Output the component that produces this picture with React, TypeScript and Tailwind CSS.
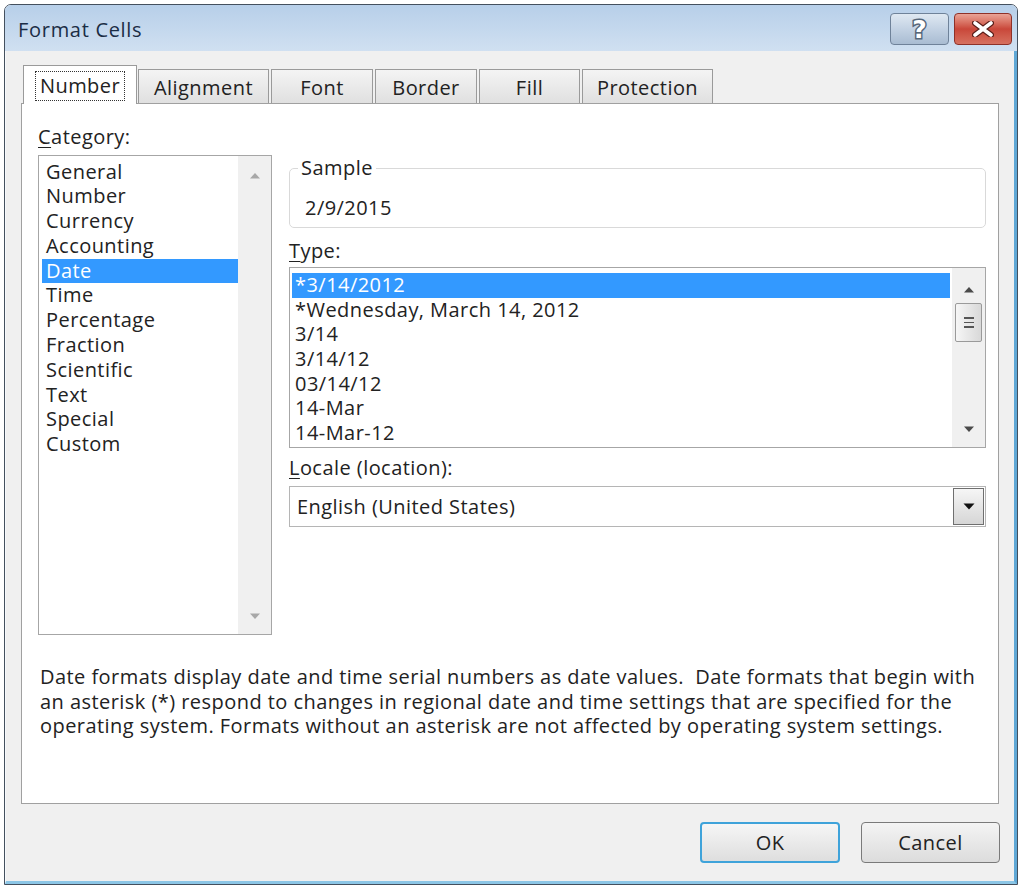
import React from "react";

const categories = [
  "General",
  "Number",
  "Currency",
  "Accounting",
  "Date",
  "Time",
  "Percentage",
  "Fraction",
  "Scientific",
  "Text",
  "Special",
  "Custom",
];

const types = [
  "*3/14/2012",
  "*Wednesday, March 14, 2012",
  "3/14",
  "3/14/12",
  "03/14/12",
  "14-Mar",
  "14-Mar-12",
];

const tabs = [
  { label: "Alignment", w: "w-[131px]", ml: "ml-[1px]" },
  { label: "Font", w: "w-[102px]", ml: "ml-[2px]" },
  { label: "Border", w: "w-[102px]", ml: "ml-[2px]" },
  { label: "Fill", w: "w-[101px]", ml: "ml-[2px]" },
  { label: "Protection", w: "w-[131px]", ml: "ml-[2px]" },
];

function Arrow({ dir, color }: { dir: "up" | "down"; color: string }) {
  return (
    <svg width="12" height="7" viewBox="0 0 12 7">
      {dir === "up" ? (
        <path d="M1 6.5 L6 1 L11 6.5 Z" fill={color} />
      ) : (
        <path d="M1 0.5 L11 0.5 L6 6 Z" fill={color} />
      )}
    </svg>
  );
}

function Label({ accel, rest }: { accel: string; rest: string }) {
  return (
    <div className="h-[24px] leading-[24px] text-[20px] tracking-[0.45px] text-[#222]">
      <span className="underline underline-offset-[3px] decoration-1">{accel}</span>
      {rest}
    </div>
  );
}

export default function App() {
  return (
    <div className="w-[1024px] h-[889px] bg-white pl-[4px] pt-[4px] font-['Open_Sans',sans-serif]">
      <div className="w-[1014px] h-[881px] border border-[#44505e] rounded-t-[7px] flex flex-col overflow-hidden">
        {/* title bar */}
        <div className="h-[46px] shrink-0 flex items-center bg-gradient-to-b from-[#b7cfe9] to-[#d0e0f1] pl-[13px] pr-[5px]">
          <span className="text-[20px] text-[#1b2d45] tracking-[0.7px] pt-[4px]">Format Cells</span>
          <div className="ml-auto flex items-start self-start mt-[8px] gap-[5px]">
            <div className="w-[59px] h-[32px] rounded-[4px] border border-[#6f8299] bg-gradient-to-b from-[#dfe8f2] via-[#c3d2e3] to-[#a9bcd2] flex items-center justify-center">
              <span className="text-[25px] font-bold text-white leading-none [paint-order:stroke_fill] [-webkit-text-stroke:3px_#55667a] font-['DejaVu_Sans',sans-serif]">
                ?
              </span>
            </div>
            <div className="w-[58px] h-[32px] rounded-[4px] border border-[#8e3128] bg-gradient-to-b from-[#e9a396] via-[#c9473a] to-[#d6705f] flex items-center justify-center">
              <svg width="22" height="16" viewBox="0 0 22 16">
                <path d="M3 2 L19 14 M19 2 L3 14" stroke="#5a1f1a" strokeWidth="6" strokeLinecap="round" />
                <path d="M3 2 L19 14 M19 2 L3 14" stroke="#ffffff" strokeWidth="3.6" strokeLinecap="round" />
              </svg>
            </div>
          </div>
        </div>

        {/* body */}
        <div className="flex-1 bg-[#f0f0f0] border-l border-l-[#f7f9fc] border-r-[3px] border-r-[#5fa8d6] border-b-[3px] border-b-[#8cc6e6] pt-[14px] pl-[15px]">
          {/* tabs */}
          <div className="relative z-10 flex items-end h-[39px] -mb-[1px] pl-[2px]">
            <div className="w-[114px] h-[39px] bg-white border border-[#9a9a9a] border-b-0 flex items-center justify-center">
              <span className="text-[20px] tracking-[0.45px] text-[#222] leading-[24px] px-[4px] py-[2px] outline-1 outline-dotted outline-[#333] mt-[1px]">
                Number
              </span>
            </div>
            {tabs.map((t) => (
              <div
                key={t.label}
                className={`${t.w} ${t.ml} h-[34px] mb-[1px] pt-[3px] border border-[#9a9a9a] border-b-0 bg-gradient-to-b from-[#f4f4f4] to-[#e0e0e0] flex items-center justify-center text-[20px] tracking-[0.45px] text-[#222]`}
              >
                {t.label}
              </div>
            ))}
          </div>

          {/* panel */}
          <div className="w-[978px] h-[701px] bg-white border border-[#a0a0a0]">
            <div className="flex pt-[21px] pl-[16px]">
              {/* left column */}
              <div className="w-[234px]">
                <Label accel="C" rest="ategory:" />
                <div className="mt-[6px] h-[480px] border border-[#a6a6a6] flex">
                  <div className="flex-1 pl-[3px] pt-[3.5px]">
                    {categories.map((c) => (
                      <div
                        key={c}
                        className={`h-[24.8px] leading-[24.8px] pl-[4px] text-[20px] tracking-[0.45px] whitespace-nowrap ${
                          c === "Date" ? "bg-[#3399ff] text-white" : "text-[#222]"
                        }`}
                      >
                        {c}
                      </div>
                    ))}
                  </div>
                  <div className="w-[33px] bg-[#f0f0f0] flex flex-col items-center justify-between pt-[16px] pb-[14px]">
                    <Arrow dir="up" color="#a8a8a8" />
                    <Arrow dir="down" color="#a8a8a8" />
                  </div>
                </div>
              </div>

              {/* right column */}
              <div className="ml-[17px] w-[697px] mt-[43px]">
                <div className="relative h-[60px] border border-[#d9d9d9] rounded-[5px] pl-[15px] pt-[27px]">
                  <span className="absolute left-[8px] -top-[13px] bg-white px-[3px] leading-[24px] text-[20px] tracking-[0.45px] text-[#222]">
                    Sample
                  </span>
                  <div className="leading-[24px] text-[20px] tracking-[0.45px] text-[#222]">2/9/2015</div>
                </div>

                <div className="mt-[11px]">
                  <Label accel="T" rest="ype:" />
                </div>
                <div className="mt-[4px] h-[181px] border border-[#a6a6a6] flex">
                  <div className="flex-1 pl-[2px] pr-[2px] pt-[5px] overflow-hidden">
                    {types.map((t, i) => (
                      <div
                        key={t}
                        className={`h-[24.7px] leading-[24.7px] pl-[3px] text-[20px] tracking-[0.45px] ${
                          i === 0 ? "bg-[#3399ff] text-white" : "text-[#222]"
                        }`}
                      >
                        {t}
                      </div>
                    ))}
                  </div>
                  <div className="w-[33px] bg-[#f0f0f0] flex flex-col items-center pt-[18px] pb-[14px]">
                    <Arrow dir="up" color="#4a4a4a" />
                    <div className="mt-[10px] w-[27px] h-[39px] rounded-[2px] border border-[#9a9a9a] bg-gradient-to-r from-[#f6f6f6] to-[#d8d8d8] flex flex-col items-center justify-center gap-[3px]">
                      <div className="w-[10px] h-[1.5px] bg-[#555]" />
                      <div className="w-[10px] h-[1.5px] bg-[#555]" />
                      <div className="w-[10px] h-[1.5px] bg-[#555]" />
                    </div>
                    <div className="mt-auto">
                      <Arrow dir="down" color="#4a4a4a" />
                    </div>
                  </div>
                </div>

                <div className="mt-[8px]">
                  <Label accel="L" rest="ocale (location):" />
                </div>
                <div className="mt-[6px] h-[41px] border border-[#b5b5b5] flex items-center pl-[7px] pr-[1px]">
                  <span className="text-[20px] tracking-[0.45px] text-[#222] leading-[24px]">English (United States)</span>
                  <div className="ml-auto w-[31px] h-[37px] border border-[#6f6f6f] bg-gradient-to-b from-[#f6f6f6] to-[#d6d6d6] flex items-center justify-center">
                    <svg width="12" height="7" viewBox="0 0 12 7">
                      <path d="M0.5 0.5 L11.5 0.5 L6 6.5 Z" fill="#111" />
                    </svg>
                  </div>
                </div>
              </div>
            </div>

            <p className="mt-[30px] pl-[18px] pr-[4px] text-[20px] tracking-[0.45px] leading-[24.5px] text-[#222] whitespace-nowrap">
              Date formats display date and time serial numbers as date values.{"\u00a0 "}Date formats that begin with
              <br />
              an asterisk (*) respond to changes in regional date and time settings that are specified for the
              <br />
              operating system. Formats without an asterisk are not affected by operating system settings.
            </p>
          </div>

          {/* buttons */}
          <div className="w-[979px] mt-[18px] flex justify-end gap-[21px]">
            <div className="w-[140px] h-[41px] rounded-[4px] border-2 border-[#3fa3da] bg-gradient-to-b from-[#f6f6f6] to-[#dedede] flex items-center justify-center text-[20px] tracking-[0.45px] text-[#222]">
              OK
            </div>
            <div className="w-[139px] h-[41px] rounded-[4px] border border-[#7a7a7a] bg-gradient-to-b from-[#f4f4f4] to-[#dcdcdc] flex items-center justify-center text-[20px] tracking-[0.45px] text-[#222]">
              Cancel
            </div>
          </div>
        </div>
      </div>
    </div>
  );
}
